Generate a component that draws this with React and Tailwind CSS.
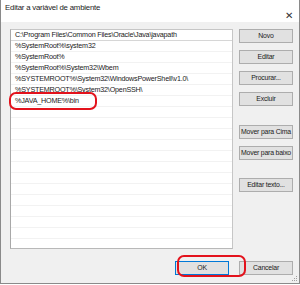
import clsx from "clsx";

const font = { fontFamily: '"Liberation Sans", Arial, sans-serif' };

const paths = [
  "C:\\Program Files\\Common Files\\Oracle\\Java\\javapath",
  "%SystemRoot%\\system32",
  "%SystemRoot%",
  "%SystemRoot%\\System32\\Wbem",
  "%SYSTEMROOT%\\System32\\WindowsPowerShell\\v1.0\\",
  "%SYSTEMROOT%\\System32\\OpenSSH\\",
  "%JAVA_HOME%\\bin",
];

const rows = Array.from({ length: 20 }, (_, i) => paths[i] ?? "");

function WinButton({ children, className, primary }) {
  return (
    <div
      className={clsx(
        "flex items-center justify-center h-[14px] w-[54px] whitespace-nowrap text-[6.9px] tracking-[-0.2px] leading-none text-[#1a1a1a] bg-[#e1e1e1] border",
        primary ? "border-[#0078d7]" : "border-[#adadad]",
        className
      )}
    >
      {children}
    </div>
  );
}

export default function App() {
  return (
    <div
      className="relative w-[300px] h-[285px] bg-white overflow-hidden"
      style={font}
    >
      <div className="flex flex-col w-[300px] h-[284px] border-l border-r border-b border-[#8a8a8a] bg-[#f0f0f0]">
        {/* Title bar */}
        <div className="relative h-[22px] bg-white shrink-0">
          <span className="absolute left-[4px] top-[2px] text-[7.8px] tracking-[-0.2px] text-[#1a1a1a]">
            Editar a variável de ambiente
          </span>
          <span className="absolute right-[6px] top-[11px] text-[10px] leading-none text-[#333]">
            ✕
          </span>
        </div>

        {/* Body */}
        <div className="flex pt-[7px]">
          <div className="ml-[9px] w-[223px] h-[220px] bg-white border border-[#c6c6c6] border-l-[#a8a8a8] border-b-[#b8b8b8] overflow-hidden">
            {rows.map((p, i) => (
              <div
                key={i}
                className={clsx(
                  "h-[11px] flex items-center pl-[4px] text-[7.2px] tracking-[-0.2px] leading-none text-[#1a1a1a] whitespace-nowrap border-b",
                  i === 0 ? "border-[#d6d6d6]" : "border-[#f2f2f2]"
                )}
              >
                {p}
              </div>
            ))}
          </div>

          <div className="ml-[6px] flex flex-col">
            <div className="flex flex-col gap-[7px]">
              <WinButton>Novo</WinButton>
              <WinButton>Editar</WinButton>
              <WinButton>Procurar...</WinButton>
              <WinButton>Excluir</WinButton>
            </div>
            <div className="flex flex-col gap-[7px] mt-[19px]">
              <WinButton>Mover para Cima</WinButton>
              <WinButton>Mover para baixo</WinButton>
            </div>
            <WinButton className="mt-[18px]">Editar texto...</WinButton>
          </div>
        </div>

        {/* Footer */}
        <div className="flex justify-end gap-[10px] mt-[12px] pr-[6px]">
          <WinButton primary className="w-[50px] h-[12px]">OK</WinButton>
          <WinButton className="w-[45px] h-[12px]">Cancelar</WinButton>
        </div>
      </div>

      {/* resize grip */}
      <svg className="absolute right-[2px] bottom-[3px]" width="6" height="6" viewBox="0 0 6 6">
        <rect x="4" y="0" width="1" height="1" fill="#a0a0a0" />
        <rect x="2" y="2" width="1" height="1" fill="#a0a0a0" />
        <rect x="4" y="2" width="1" height="1" fill="#a0a0a0" />
        <rect x="0" y="4" width="1" height="1" fill="#a0a0a0" />
        <rect x="2" y="4" width="1" height="1" fill="#a0a0a0" />
        <rect x="4" y="4" width="1" height="1" fill="#a0a0a0" />
      </svg>

      {/* red annotations */}
      <div className="absolute left-[9px] top-[92px] w-[88px] h-[18px] rounded-[7px] border-[2.5px] border-[#e3121c]" />
      <div className="absolute left-[177px] top-[255px] w-[69px] h-[22px] rounded-[7px] border-[2.5px] border-[#e3121c]" />
    </div>
  );
}
